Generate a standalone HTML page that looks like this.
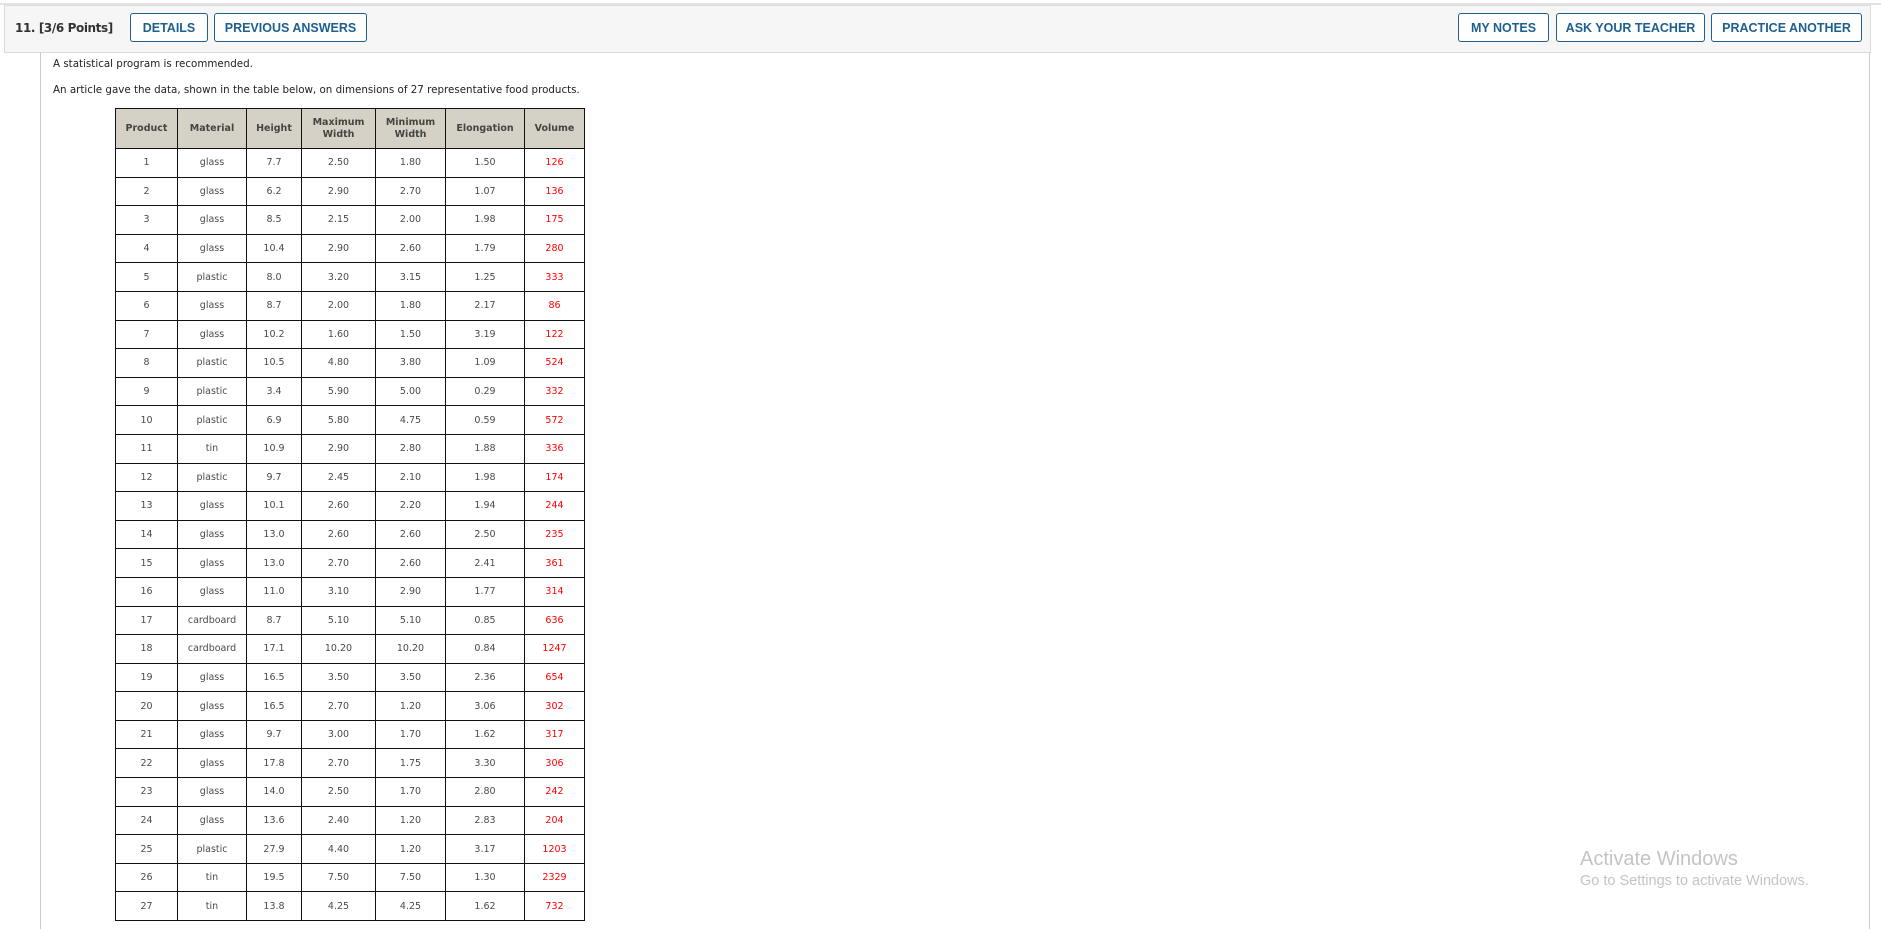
<!DOCTYPE html>
<html><head><meta charset="utf-8"><style>
body{margin:0;width:1881px;height:929px;background:#fff;position:relative;overflow:hidden;font-family:"DejaVu Sans",Verdana,sans-serif;}
.topline{position:absolute;left:0;top:3px;width:1881px;height:2px;background:#e2e2e2}
.hdr{position:absolute;left:4px;top:5px;width:1865px;height:46px;background:#f6f6f6;border:1px solid #dcdcdc;}
.num{position:absolute;left:15px;top:21px;font:bold 12px "DejaVu Sans",sans-serif;color:#333;letter-spacing:-0.4px}
.btn{position:absolute;top:13px;height:29px;border:1px solid #1e5f8e;border-radius:3px;background:#fff;color:#1e5f8e;font:bold 12.5px "Liberation Sans",sans-serif;display:flex;align-items:center;justify-content:center;box-sizing:border-box}
.vline{position:absolute;left:40px;top:52px;width:1px;height:877px;background:#ccc}
.rline{position:absolute;left:1869px;top:52px;width:1px;height:877px;background:#ccc}
.p{position:absolute;left:53px;font-size:10.3px;color:#222}
table{position:absolute;left:115px;top:108px;border-collapse:collapse;table-layout:fixed;font-size:9.5px;color:#4a4a4a}
td,th{border:1.5px solid #111;text-align:center;padding:0}
th{background:#d6d1c6;font-weight:bold;height:39px;line-height:12px;font-size:9.5px;color:#444}
td{height:27.6px}
td.r{color:#f00}
.aw{position:absolute;left:1580px;top:848px;color:#c4c4c4;font-family:"Liberation Sans",sans-serif}
</style></head><body>
<div class="topline"></div>
<div class="hdr"></div>
<div class="num">11. [3/6 Points]</div>
<div class="btn" style="left:130px;width:78px">DETAILS</div>
<div class="btn" style="left:214px;width:153px">PREVIOUS ANSWERS</div>
<div class="btn" style="left:1458px;width:91px">MY NOTES</div>
<div class="btn" style="left:1556px;width:149px">ASK YOUR TEACHER</div>
<div class="btn" style="left:1711px;width:151px">PRACTICE ANOTHER</div>
<div class="vline"></div>
<div class="rline"></div>
<div class="p" style="top:58px">A statistical program is recommended.</div>
<div class="p" style="top:84px">An article gave the data, shown in the table below, on dimensions of 27 representative food products.</div>
<table>
<colgroup><col style="width:62px"><col style="width:69px"><col style="width:55px"><col style="width:74px"><col style="width:70px"><col style="width:79px"><col style="width:60px"></colgroup>
<tr><th>Product</th><th>Material</th><th>Height</th><th>Maximum<br>Width</th><th>Minimum<br>Width</th><th>Elongation</th><th>Volume</th></tr>
<tr><td>1</td><td>glass</td><td>7.7</td><td>2.50</td><td>1.80</td><td>1.50</td><td class="r">126</td></tr>
<tr><td>2</td><td>glass</td><td>6.2</td><td>2.90</td><td>2.70</td><td>1.07</td><td class="r">136</td></tr>
<tr><td>3</td><td>glass</td><td>8.5</td><td>2.15</td><td>2.00</td><td>1.98</td><td class="r">175</td></tr>
<tr><td>4</td><td>glass</td><td>10.4</td><td>2.90</td><td>2.60</td><td>1.79</td><td class="r">280</td></tr>
<tr><td>5</td><td>plastic</td><td>8.0</td><td>3.20</td><td>3.15</td><td>1.25</td><td class="r">333</td></tr>
<tr><td>6</td><td>glass</td><td>8.7</td><td>2.00</td><td>1.80</td><td>2.17</td><td class="r">86</td></tr>
<tr><td>7</td><td>glass</td><td>10.2</td><td>1.60</td><td>1.50</td><td>3.19</td><td class="r">122</td></tr>
<tr><td>8</td><td>plastic</td><td>10.5</td><td>4.80</td><td>3.80</td><td>1.09</td><td class="r">524</td></tr>
<tr><td>9</td><td>plastic</td><td>3.4</td><td>5.90</td><td>5.00</td><td>0.29</td><td class="r">332</td></tr>
<tr><td>10</td><td>plastic</td><td>6.9</td><td>5.80</td><td>4.75</td><td>0.59</td><td class="r">572</td></tr>
<tr><td>11</td><td>tin</td><td>10.9</td><td>2.90</td><td>2.80</td><td>1.88</td><td class="r">336</td></tr>
<tr><td>12</td><td>plastic</td><td>9.7</td><td>2.45</td><td>2.10</td><td>1.98</td><td class="r">174</td></tr>
<tr><td>13</td><td>glass</td><td>10.1</td><td>2.60</td><td>2.20</td><td>1.94</td><td class="r">244</td></tr>
<tr><td>14</td><td>glass</td><td>13.0</td><td>2.60</td><td>2.60</td><td>2.50</td><td class="r">235</td></tr>
<tr><td>15</td><td>glass</td><td>13.0</td><td>2.70</td><td>2.60</td><td>2.41</td><td class="r">361</td></tr>
<tr><td>16</td><td>glass</td><td>11.0</td><td>3.10</td><td>2.90</td><td>1.77</td><td class="r">314</td></tr>
<tr><td>17</td><td>cardboard</td><td>8.7</td><td>5.10</td><td>5.10</td><td>0.85</td><td class="r">636</td></tr>
<tr><td>18</td><td>cardboard</td><td>17.1</td><td>10.20</td><td>10.20</td><td>0.84</td><td class="r">1247</td></tr>
<tr><td>19</td><td>glass</td><td>16.5</td><td>3.50</td><td>3.50</td><td>2.36</td><td class="r">654</td></tr>
<tr><td>20</td><td>glass</td><td>16.5</td><td>2.70</td><td>1.20</td><td>3.06</td><td class="r">302</td></tr>
<tr><td>21</td><td>glass</td><td>9.7</td><td>3.00</td><td>1.70</td><td>1.62</td><td class="r">317</td></tr>
<tr><td>22</td><td>glass</td><td>17.8</td><td>2.70</td><td>1.75</td><td>3.30</td><td class="r">306</td></tr>
<tr><td>23</td><td>glass</td><td>14.0</td><td>2.50</td><td>1.70</td><td>2.80</td><td class="r">242</td></tr>
<tr><td>24</td><td>glass</td><td>13.6</td><td>2.40</td><td>1.20</td><td>2.83</td><td class="r">204</td></tr>
<tr><td>25</td><td>plastic</td><td>27.9</td><td>4.40</td><td>1.20</td><td>3.17</td><td class="r">1203</td></tr>
<tr><td>26</td><td>tin</td><td>19.5</td><td>7.50</td><td>7.50</td><td>1.30</td><td class="r">2329</td></tr>
<tr><td>27</td><td>tin</td><td>13.8</td><td>4.25</td><td>4.25</td><td>1.62</td><td class="r">732</td></tr>
</table>
<div class="aw" style="font-size:20px">Activate Windows</div>
<div class="aw" style="top:873px;font-size:14.5px">Go to Settings to activate Windows.</div>
</body></html>
